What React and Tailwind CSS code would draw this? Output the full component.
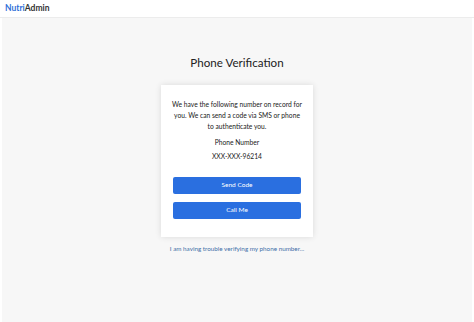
export default function App() {
  return (
    <div className="flex h-[322px] w-[474px] flex-col bg-white font-['Lato',sans-serif]">
      <header className="flex h-[18px] items-center border-b border-[#ececec] bg-white px-[5px]">
        <span className="text-[8.5px] font-bold leading-none">
          <span className="text-[#2f6fd8]">Nutri</span>
          <span className="text-[#333]">Admin</span>
        </span>
      </header>
      <main className="mx-[2px] flex flex-1 flex-col items-center bg-[#f7f7f7]">
        <h1 className="mt-[39px] text-[11.6px] leading-none text-[#222]">Phone Verification</h1>
        <div className="mt-[16px] flex w-[152px] flex-col items-center bg-white px-[11px] pt-[14px] pb-[18px] shadow-[0_0_6px_rgba(0,0,0,0.12)]">
          <p className="text-center text-[6.7px] leading-[11px] text-[#222]">
            We have the following number on record for you. We can send a code via SMS or phone to authenticate you.
          </p>
          <p className="mt-[5px] text-[6.7px] leading-[11px] text-[#222]">Phone Number</p>
          <p className="mt-[3px] text-[6.7px] leading-[11px] text-[#222]">XXX-XXX-96214</p>
          <button className="mt-[15px] h-[17px] w-[128px] rounded-[2px] bg-[#2a6fe0] text-[6.5px] font-normal text-white">Send Code</button>
          <button className="mt-[8px] h-[17px] w-[128px] rounded-[2px] bg-[#2a6fe0] text-[6.5px] font-normal text-white">Call Me</button>
        </div>
        <a className="mt-[7px] text-[6.3px] font-normal text-[#3f6fa8]">I am having trouble verifying my phone number...</a>
      </main>
    </div>
  );
}
